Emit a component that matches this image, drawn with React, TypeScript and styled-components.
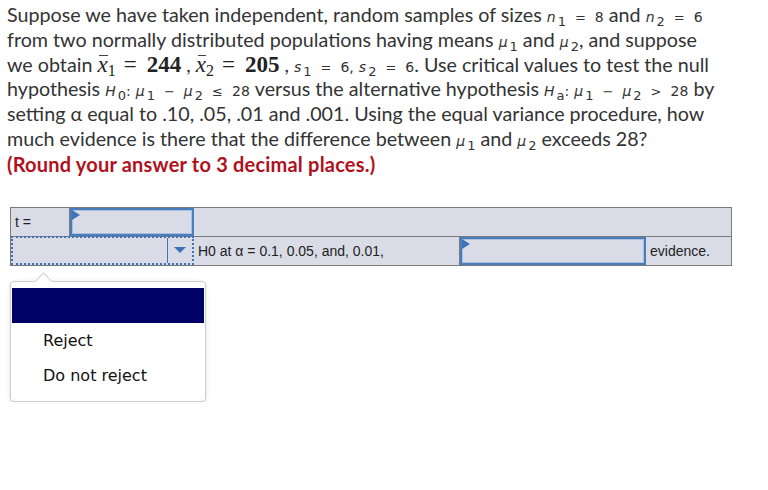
import React from "react";
import styled, { createGlobalStyle } from "styled-components";

const GlobalStyle = createGlobalStyle`
  body {
    margin: 0;
    background: #fff;
    font-family: Lato, "Open Sans", sans-serif;
    color: #333;
  }
`;

const Page = styled.div`
  padding: 3px 0 0 7px;
`;

const Question = styled.p`
  margin: 0;
  width: 760px;
  font-size: 19.7px;
  line-height: 24.8px;
`;

const Var = styled.span<{ $up?: boolean }>`
  font-family: "DejaVu Sans", sans-serif;
  font-size: 14px;
  line-height: 1;
  font-style: ${(p) => (p.$up ? "normal" : "italic")};
`;

const Sym = styled.span`
  font-family: "DejaVu Sans", sans-serif;
  font-size: 13px;
  line-height: 1;
  padding: 0 9px;
`;

const Sub = styled.span`
  position: relative;
  top: 4px;
  margin-left: 2px;
  font-family: "DejaVu Sans", sans-serif;
  font-size: 13px;
  font-style: normal;
  line-height: 1;
`;

const Tex = styled.span`
  font-family: "Liberation Serif", serif;
  font-size: 23px;
  line-height: 1;
  color: #222;
  b {
    font-weight: 700;
  }
`;

const Bar = styled.i`
  position: relative;
  &::before {
    content: "";
    position: absolute;
    left: 2px;
    right: 0;
    top: 3px;
    border-top: 1px solid #444;
  }
`;

const TexSub = styled.span`
  position: relative;
  top: 4px;
  font-size: 16px;
`;

const Eq = styled.span`
  padding: 0 10px 0 8px;
`;

const Note = styled.p`
  margin: 0;
  font-size: 20px;
  line-height: 24.8px;
  letter-spacing: 0.2px;
  font-weight: 700;
  color: #b0111c;
`;

const Area = styled.div`
  margin: 30px 0 0 3px;
`;

const Grid = styled.div`
  width: 720px;
  border: 1px solid #7a7a7a;
  background: #d9dce6;
  font-family: "Liberation Sans", Arial, sans-serif;
  font-size: 14px;
  color: #222;
`;

const Row = styled.div<{ $last?: boolean }>`
  display: flex;
  height: 28px;
  border-bottom: ${(p) => (p.$last ? "none" : "1px solid #7a7a7a")};
`;

const Cell = styled.div<{ $w?: number; $divider?: boolean }>`
  box-sizing: border-box;
  width: ${(p) => (p.$w ? `${p.$w}px` : "auto")};
  flex: ${(p) => (p.$w ? "none" : "1")};
  display: flex;
  align-items: center;
  padding: 0 4px;
  border-right: ${(p) => (p.$divider ? "1px solid #7a7a7a" : "none")};
  white-space: nowrap;
`;

const Input = styled.div<{ $w: number }>`
  position: relative;
  box-sizing: border-box;
  width: ${(p) => p.$w}px;
  height: 28px;
  border: 2px solid #4a7dbb;
  box-shadow: inset 0 0 0 1px #a9c0de;
  &::before {
    content: "";
    position: absolute;
    left: 0;
    top: 0;
    border-style: solid;
    border-width: 5px 0 5px 8px;
    border-color: transparent transparent transparent #3d74b8;
  }
`;

const Select = styled.div`
  box-sizing: border-box;
  width: 183px;
  height: 29px;
  margin-top: -1px;
  border: 2px dotted #3d74b8;
  display: flex;
  justify-content: flex-end;
`;

const Caret = styled.div`
  width: 24px;
  border-left: 1px solid #3d74b8;
  display: flex;
  align-items: center;
  justify-content: center;
  &::after {
    content: "";
    border-style: solid;
    border-width: 6px 6px 0 6px;
    border-color: #3d74b8 transparent transparent transparent;
  }
`;

const Menu = styled.div`
  position: relative;
  margin-top: 15px;
  box-sizing: border-box;
  width: 196px;
  padding: 6px 1px 8px;
  background: #fff;
  border: 1px solid #cfcfcf;
  border-radius: 4px;
  box-shadow: 0 1px 5px rgba(0, 0, 0, 0.12);
  font-family: "DejaVu Sans", Verdana, sans-serif;
  font-size: 16px;
  color: #111;
  &::before {
    content: "";
    position: absolute;
    left: 26px;
    top: -7px;
    width: 12px;
    height: 12px;
    background: #fff;
    border-left: 1px solid #cfcfcf;
    border-top: 1px solid #cfcfcf;
    transform: rotate(45deg);
  }
`;

const Option = styled.div<{ $active?: boolean }>`
  position: relative;
  height: 35px;
  display: flex;
  align-items: center;
  padding-left: 31px;
  background: ${(p) => (p.$active ? "#000066" : "transparent")};
`;

const M = ({ v, s }: { v: string; s?: string }) => (
  <Var>
    {v}
    {s && <Sub>{s}</Sub>}
  </Var>
);

const N = ({ t }: { t: string }) => <Var $up>{t}</Var>;

const XBar = ({ s, val }: { s: string; val: string }) => (
  <Tex>
    <Bar>x</Bar>
    <TexSub>{s}</TexSub>
    <Eq>=</Eq>
    <b>{val}</b>
  </Tex>
);

export default function App() {
  return (
    <Page>
      <GlobalStyle />
      <Question>
        Suppose we have taken independent, random samples of sizes <M v="n" s="1" />
        <Sym>=</Sym>
        <N t="8" /> and <M v="n" s="2" />
        <Sym>=</Sym>
        <N t="6" />
        <br />
        from two normally distributed populations having means <M v="μ" s="1" /> and{" "}
        <M v="μ" s="2" />, and suppose
        <br />
        we obtain <XBar s="1" val="244" /> , <XBar s="2" val="205" /> , <M v="s" s="1" />
        <Sym>=</Sym>
        <N t="6," /> <M v="s" s="2" />
        <Sym>=</Sym>
        <N t="6" />. Use critical values to test the null
        <br />
        hypothesis <M v="H" s="0" />
        <N t=":" /> <M v="μ" s="1" />
        <Sym>−</Sym>
        <M v="μ" s="2" />
        <Sym>≤</Sym>
        <N t="28" /> versus the alternative hypothesis <M v="H" s="a" />
        <N t=":" /> <M v="μ" s="1" />
        <Sym>−</Sym>
        <M v="μ" s="2" />
        <Sym>&gt;</Sym>
        <N t="28" /> by
        <br />
        setting α equal to .10, .05, .01 and .001. Using the equal variance procedure, how
        <br />
        much evidence is there that the difference between <M v="μ" s="1" /> and{" "}
        <M v="μ" s="2" /> exceeds 28?
      </Question>
      <Note>(Round your answer to 3 decimal places.)</Note>
      <Area>
        <Grid>
          <Row>
            <Cell $w={59} $divider>
              t =
            </Cell>
            <Input $w={124} />
            <Cell />
          </Row>
          <Row $last>
            <Select>
              <Caret />
            </Select>
            <Cell $w={266} $divider>
              H0 at α = 0.1, 0.05, and, 0.01,
            </Cell>
            <Input $w={186} />
            <Cell>evidence.</Cell>
          </Row>
        </Grid>
        <Menu>
          <Option $active />
          <Option>Reject</Option>
          <Option>Do not reject</Option>
        </Menu>
      </Area>
    </Page>
  );
}
